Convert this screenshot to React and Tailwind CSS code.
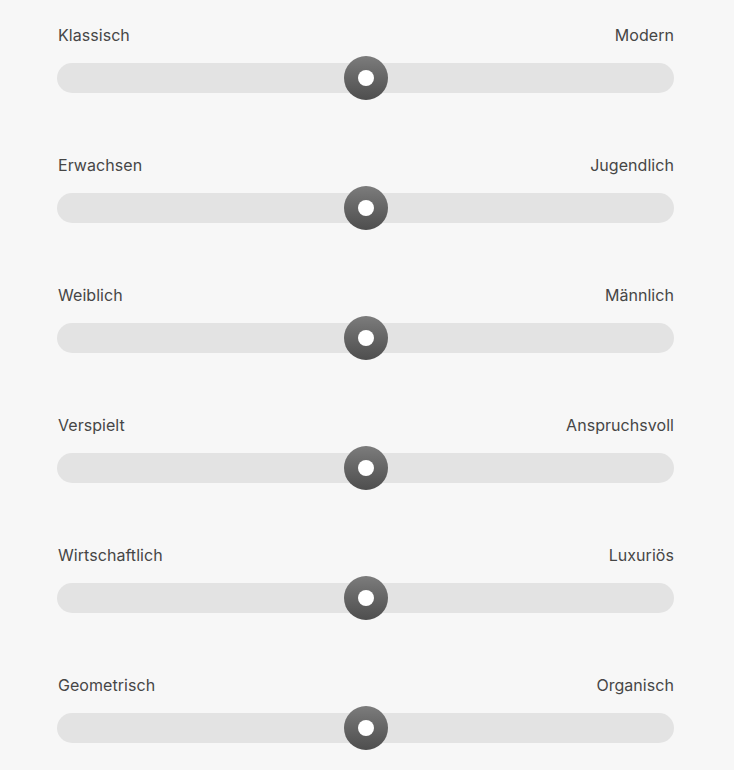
import React from "react";

const sliders = [
  ["Klassisch", "Modern"],
  ["Erwachsen", "Jugendlich"],
  ["Weiblich", "Männlich"],
  ["Verspielt", "Anspruchsvoll"],
  ["Wirtschaftlich", "Luxuriös"],
  ["Geometrisch", "Organisch"],
];

const Slider = ({ left, right }) => (
  <div className="flex flex-col">
    <div className="flex justify-between text-[16px] leading-6 tracking-[0.05px] text-[#464646]">
      <span className="pl-px">{left}</span>
      <span>{right}</span>
    </div>
    <div className="relative mt-4 h-[30px] rounded-full bg-[#e3e3e3]">
      {/* thumb */}
      <div className="absolute left-1/2 top-1/2 -translate-x-1/2 -translate-y-1/2 w-11 h-11 rounded-full bg-gradient-to-b from-[#7c7c7c] to-[#4e4e4e] flex items-center justify-center">
        <div className="w-4 h-4 rounded-full bg-white" />
      </div>
    </div>
  </div>
);

export default function App() {
  return (
    <div
      className="min-h-[770px] bg-[#f7f7f7] pt-[23px] pl-[57px] pr-[60px] pb-6 flex flex-col gap-[60px]"
      style={{ fontFamily: "Inter, 'Liberation Sans', sans-serif" }}
    >
      {sliders.map(([l, r]) => (
        <Slider key={l} left={l} right={r} />
      ))}
    </div>
  );
}
